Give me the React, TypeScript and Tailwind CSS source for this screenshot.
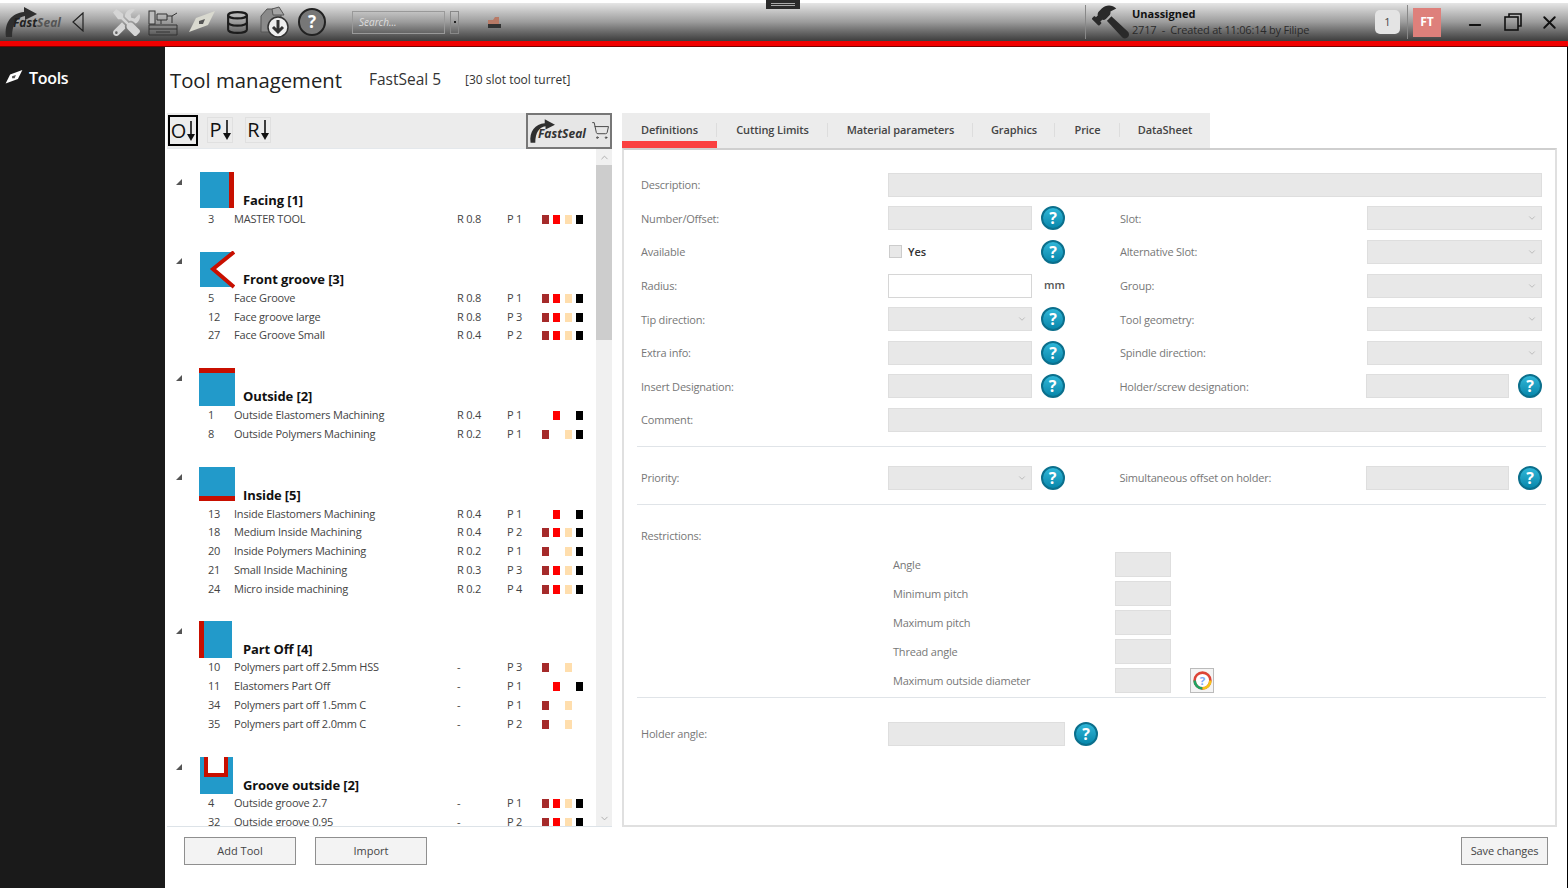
import { ChevronDown, ChevronUp, Database, Minus, ShoppingCart, X } from 'lucide-react'
import { FaHammer, FaTools } from 'react-icons/fa'

// ── Data ───────────────────────────────────────────────────────────────────

type Kind = 'right' | 'vee' | 'top' | 'bottom' | 'left' | 'groove'

const GROUPS: Array<{ title: string; kind: Kind; gap: number; rows: Array<[string, string, string, string, string]> }> = [
  { title: 'Facing [1]', kind: 'right', gap: 22, rows: [['3', 'MASTER TOOL', 'R 0.8', 'P 1', 'abcd']] },
  { title: 'Front groove [3]', kind: 'vee', gap: 23, rows: [
    ['5', 'Face Groove', 'R 0.8', 'P 1', 'abcd'],
    ['12', 'Face groove large', 'R 0.8', 'P 3', 'abcd'],
    ['27', 'Face Groove Small', 'R 0.4', 'P 2', 'abcd'],
  ] },
  { title: 'Outside [2]', kind: 'top', gap: 23, rows: [
    ['1', 'Outside Elastomers Machining', 'R 0.4', 'P 1', 'bd'],
    ['8', 'Outside Polymers Machining', 'R 0.2', 'P 1', 'acd'],
  ] },
  { title: 'Inside [5]', kind: 'bottom', gap: 22, rows: [
    ['13', 'Inside Elastomers Machining', 'R 0.4', 'P 1', 'bd'],
    ['18', 'Medium Inside Machining', 'R 0.4', 'P 2', 'abcd'],
    ['20', 'Inside Polymers Machining', 'R 0.2', 'P 1', 'acd'],
    ['21', 'Small Inside Machining', 'R 0.3', 'P 3', 'abcd'],
    ['24', 'Micro inside machining', 'R 0.2', 'P 4', 'abcd'],
  ] },
  { title: 'Part Off [4]', kind: 'left', gap: 23, rows: [
    ['10', 'Polymers part off 2.5mm HSS', '-', 'P 3', 'ac'],
    ['11', 'Elastomers Part Off', '-', 'P 1', 'bd'],
    ['34', 'Polymers part off 1.5mm C', '-', 'P 1', 'ac'],
    ['35', 'Polymers part off 2.0mm C', '-', 'P 2', 'ac'],
  ] },
  { title: 'Groove outside [2]', kind: 'groove', gap: 0, rows: [
    ['4', 'Outside groove 2.7', '-', 'P 1', 'abcd'],
    ['32', 'Outside groove 0.95', '-', 'P 2', 'abcd'],
  ] },
]

const TABS = [
  { label: 'Definitions', w: 'w-[95px]' },
  { label: 'Cutting Limits', w: 'w-[111px]' },
  { label: 'Material parameters', w: 'w-[145px]' },
  { label: 'Graphics', w: 'w-[82px]' },
  { label: 'Price', w: 'w-[65px]' },
  { label: 'DataSheet', w: 'w-[90px]' },
]

// ── Small drawings ─────────────────────────────────────────────────────────

function Logo({ small }: { small?: boolean }) {
  return (
    <div className={`relative flex-shrink-0 ${small ? 'w-[54px] h-[30px]' : 'w-[61px] h-[32px]'}`}>
      <svg viewBox="0 0 61 32" className={small ? 'w-[48px] h-[30px]' : 'w-full h-full'}>
        <path d="M2 31 C0 16 8 7 20 6 L20 1 L33 8 L21 14 L21 10 C13 11 8 18 8 31 Z" fill="#2f2f2f" />
      </svg>
      <span className={`absolute font-bold italic whitespace-nowrap leading-[16px] ${small ? 'left-[9px] top-[10px] text-[12px] text-[#333]' : 'left-[9px] top-[9px] text-[12px] text-[#222]'}`}>
        Fast<span className={small ? '' : 'text-[#555]'}>Seal</span>
      </span>
    </div>
  )
}

function Insert({ className }: { className: string }) {
  return (
    <svg viewBox="0 0 28 24" className={className}>
      <path d="M1 22 L8 8 L27 1 L20 15 Z" fill="currentColor" />
      <path d="M11 11 L17 9 L15 14 L11 14 Z" fill="#555" />
    </svg>
  )
}

function Machine() {
  return (
    <svg viewBox="0 0 30 28" className="w-[30px] h-[28px] ml-[8px]" fill="none" stroke="#333" strokeWidth="1">
      <rect x="1" y="3" width="6" height="13" fill="#bbb" />
      <path d="M1 17 H29 V27 H1 Z M1 21 H29 M8 24 H22" />
      <path d="M9 6 H19 V12 H9 Z M19 8 H24 L29 5 M24 8 V15 M13 12 V16" />
    </svg>
  )
}

function PackageDown() {
  return (
    <div className="relative w-[30px] h-[32px] ml-[9px]">
      <svg viewBox="0 0 30 32" className="w-full h-full">
        <path d="M2 10 L8 3 H17 L22 9 V26 H2 Z" fill="#8a8a8a" stroke="#555" />
        <path d="M13 3 L20 1 L25 9 H14 Z" fill="#a5a5a5" stroke="#555" />
        <circle cx="19" cy="21" r="10" fill="#eee" stroke="#333" strokeWidth="1.5" />
        <path d="M19 14 V26 M14 21 L19 26 L24 21" stroke="#333" strokeWidth="3" fill="none" />
      </svg>
    </div>
  )
}

function ToolIcon({ kind }: { kind: Kind }) {
  const red = '#c80f00'
  const blue = '#229aca'
  return (
    <svg viewBox="0 0 36 38" className="w-[36px] h-[38px] flex-shrink-0 mt-[1px] -ml-[1px]">
      {kind === 'right' && <><rect x="1" y="0" width="29" height="36" fill={blue} /><rect x="30" y="0" width="5" height="36" fill={red} /></>}
      {kind === 'vee' && <><path d="M1 1 H35 L14 18 L35 36 H1 Z" fill={blue} /><path d="M35 1 L14 18 L35 36" fill="none" stroke={red} strokeWidth="4" /></>}
      {kind === 'top' && <><rect x="0" y="5" width="36" height="34" fill={blue} /><rect x="0" y="0" width="36" height="5" fill={red} /></>}
      {kind === 'bottom' && <><rect x="0" y="0" width="36" height="29" fill={blue} /><rect x="0" y="29" width="36" height="5" fill={red} /></>}
      {kind === 'left' && <><rect x="4" y="0" width="29" height="37" fill={blue} /><rect x="0" y="0" width="5" height="37" fill={red} /></>}
      {kind === 'groove' && <><rect x="1" y="0" width="33" height="37" fill={blue} /><path d="M7 0 V18 H27 V0" fill="#fff" stroke={red} strokeWidth="4" /></>}
    </svg>
  )
}

function SortIcon({ letter, active }: { letter: string; active?: boolean }) {
  return (
    <div className={`flex items-center justify-center text-[20px] leading-none text-[#111] ${active ? 'w-[30px] h-[31px] border-2 border-black' : 'w-[26px] h-[26px] border border-[#e0e0e0]'}`}>
      {letter}
      <svg viewBox="0 0 8 20" className="w-[8px] h-[22px] ml-[1px]">
        <path d="M4 0 V15" stroke="#111" strokeWidth="1.6" />
        <path d="M0 13 H8 L4 20 Z" fill="#111" />
      </svg>
    </div>
  )
}

function Help({ className = '' }: { className?: string }) {
  return (
    <div className={`w-[24px] h-[24px] rounded-full flex-shrink-0 flex items-center justify-center border-2 border-[#0b6f8c] bg-gradient-to-b from-[#2fb7d8] to-[#0587ab] text-white text-[16px] font-bold leading-none ${className}`}>
      ?
    </div>
  )
}

// ── Form pieces ────────────────────────────────────────────────────────────

const inputCls = 'h-[24px] bg-[#e8e8e8] border border-[#dedede]'

function Select({ w }: { w: string }) {
  return (
    <div className={`${inputCls} ${w} flex items-center justify-end pr-[4px]`}>
      <ChevronDown className="w-[10px] h-[10px] text-[#b5b5b5]" />
    </div>
  )
}

function Label({ w, children }: { w: string; children: React.ReactNode }) {
  return <div className={`${w} flex-shrink-0 text-[11px] text-[#777] leading-none tracking-[-0.2px]`}>{children}</div>
}

function Row({ h = 'h-[33.6px]', children }: { h?: string; children: React.ReactNode }) {
  return <div className={`${h} flex items-center`}>{children}</div>
}

function Divider() {
  return <div className="h-px bg-[#e0e4e8] -ml-[4px] -mr-[4px]" />
}

// ── Page ───────────────────────────────────────────────────────────────────

export default function App() {
  return (
    <div className="relative w-screen h-screen overflow-hidden flex flex-col bg-white font-['Open_Sans',sans-serif]">

      {/* Header */}
      <header className="h-[47px] flex-shrink-0 flex flex-col">
        <div className="h-[38px] flex-shrink-0 mt-[3px] flex items-center pl-[4px] bg-gradient-to-b from-[#e6e6e6] via-[#9c9c9c] to-[#3e3e3e]">
          <Logo />
          <svg viewBox="0 0 12 20" className="w-[12px] h-[20px] ml-[7px]" fill="none" stroke="#222" strokeWidth="1.2">
            <path d="M11 1 L1 10 L11 19 Z" />
          </svg>
          <FaTools className="w-[27px] h-[27px] ml-[29px] text-[#d5d5d5]" />
          <Machine />
          <Insert className="w-[28px] h-[24px] ml-[10px] text-[#d9d9cf]" />
          <Database className="w-[25px] h-[27px] ml-[9px] text-[#1c1c1c]" strokeWidth={2} />
          <PackageDown />
          <div className="w-[28px] h-[28px] ml-[9px] rounded-full border-2 border-[#222] bg-[#777] flex items-center justify-center text-white text-[17px] font-bold">?</div>
          <div className="w-[93px] h-[23px] ml-[26px] border border-[#999] flex items-center pl-[6px] text-[10px] italic text-[#ddd]">Search...</div>
          <div className="w-[9px] h-[23px] ml-[5px] border border-[#888] flex items-center justify-center">
            <div className="w-[2px] h-[2px] bg-[#222]" />
          </div>
          <svg viewBox="0 0 14 12" className="w-[14px] h-[12px] ml-[28px]">
            <path d="M1 4 H6 L8 1 H12 V8 H1 Z" fill="#b87a66" />
            <rect x="1" y="8" width="13" height="4" fill="#333" />
          </svg>
          <div className="flex-1" />
          <div className="w-px h-[34px] bg-[#888]" />
          <FaHammer className="w-[37px] h-[36px] ml-[6px] text-[#2a2a2a] -scale-x-100" />
          <div className="ml-[3px] w-[243px] text-[11px] leading-[16px] -mt-[1px]">
            <div className="font-bold text-[#111]">Unassigned</div>
            <div className="text-[#2a2a2a] whitespace-nowrap tracking-[-0.2px]">2717&nbsp; -&nbsp; Created at 11:06:14 by Filipe</div>
          </div>
          <div className="w-[25px] h-[24px] rounded-[5px] bg-[#e4e4e4] flex items-center justify-center text-[11px] text-[#444]">1</div>
          <div className="w-px h-[34px] ml-[7px] bg-[#888]" />
          <div className="w-[28px] h-[29px] ml-[5px] bg-[#de807b] flex items-center justify-center text-[12px] font-bold text-white">FT</div>
          <Minus className="w-[18px] h-[18px] ml-[25px] mt-[6px] text-[#111]" strokeWidth={2.4} />
          <svg viewBox="0 0 18 18" className="w-[18px] h-[18px] ml-[20px]" fill="none" stroke="#111" strokeWidth="1.6">
            <path d="M5 4 V1 H17 V13 H14" />
            <rect x="1" y="4" width="13" height="13" />
          </svg>
          <X className="w-[21px] h-[21px] ml-[17px] mr-[8px] text-[#111]" strokeWidth={2.2} />
        </div>
        <div className="h-[6px] flex-shrink-0 bg-[#f00000] border-b border-[#700]" />
      </header>

      {/* Body */}
      <div className="flex-1 flex min-h-0">
        <aside className="w-[165px] flex-shrink-0 bg-[#1a1a1a] flex items-start pt-[21px] pl-[5px] gap-[6px]">
          <Insert className="w-[18px] h-[18px] text-white" />
          <span className="text-[16px] leading-[20px] font-semibold text-white tracking-[-0.3px]">Tools</span>
        </aside>

        <main className="flex-1 min-w-0 flex flex-col border-r border-black">
          {/* Title */}
          <div className="h-[66px] flex-shrink-0 flex items-center pl-[5px]">
            <h1 className="w-[199px] text-[20.3px] leading-[28px] text-[#222]">Tool management</h1>
            <span className="w-[96px] text-[15.5px] text-[#333]">FastSeal 5</span>
            <span className="text-[12px] text-[#333]">[30 slot tool turret]</span>
          </div>

          <div className="h-[714px] flex-shrink-0 flex pl-[2px]">
            {/* Tree column */}
            <div className="w-[445px] flex-shrink-0 flex flex-col">
              <div className="h-[36px] flex-shrink-0 flex items-center bg-[#ececec] pl-[1px] border-b border-[#e4e8ec]">
                <SortIcon letter="O" active />
                <div className="ml-[9px] mb-[2px]"><SortIcon letter="P" /></div>
                <div className="ml-[12px] mb-[2px]"><SortIcon letter="R" /></div>
                <div className="ml-auto w-[86px] h-[36px] border-2 border-[#777] flex items-center pl-[1px] bg-[#e6e6e6]">
                  <Logo small />
                  <ShoppingCart className="w-[22px] h-[23px] ml-[8px] text-[#444]" strokeWidth={1.2} />
                </div>
              </div>

              <div className="flex-1 min-h-0 flex border-b border-[#dde3e8]">
                <div className="flex-1 min-w-0 overflow-hidden pt-[22.3px]">
                  {GROUPS.map(g => (
                    <div key={g.title} style={{ marginBottom: g.gap }}>
                      <div className="h-[38px] flex">
                        <div className="w-[33px] pl-[9px] pt-[8px] flex-shrink-0">
                          <div className="w-0 h-0 border-l-[6px] border-l-transparent border-b-[6px] border-b-[#555]" />
                        </div>
                        <ToolIcon kind={g.kind} />
                        <div className="ml-[8px] self-end text-[13px] leading-[18px] font-bold text-[#111] tracking-[-0.1px]">{g.title}</div>
                      </div>
                      {g.rows.map(r => (
                        <div key={r[0]} className="h-[18.75px] flex items-center text-[11px] text-[#444] leading-none tracking-[-0.2px]">
                          <span className="w-[67px] pl-[41px] flex-shrink-0">{r[0]}</span>
                          <span className="w-[223px] flex-shrink-0 whitespace-nowrap">{r[1]}</span>
                          <span className="w-[50px] flex-shrink-0">{r[2]}</span>
                          <span className="w-[35px] flex-shrink-0">{r[3]}</span>
                          <div className="flex gap-[4.3px] mt-[2px]">
                            <div className={`w-[7px] h-[9px] ${r[4].includes('a') ? 'bg-[#a52a2a]' : ''}`} />
                            <div className={`w-[7px] h-[9px] ${r[4].includes('b') ? 'bg-[#ff0000]' : ''}`} />
                            <div className={`w-[7px] h-[9px] ${r[4].includes('c') ? 'bg-[#ffdead]' : ''}`} />
                            <div className={`w-[7px] h-[9px] ${r[4].includes('d') ? 'bg-black' : ''}`} />
                          </div>
                        </div>
                      ))}
                    </div>
                  ))}
                </div>
                {/* Scrollbar */}
                <div className="w-[16px] flex-shrink-0 bg-[#f0f0f0] flex flex-col">
                  <div className="h-[16px] flex items-center justify-center"><ChevronUp className="w-[11px] h-[11px] text-[#aaa]" /></div>
                  <div className="h-[175px] bg-[#cdcdcd]" />
                  <div className="flex-1" />
                  <div className="h-[16px] flex items-center justify-center"><ChevronDown className="w-[11px] h-[11px] text-[#aaa]" /></div>
                </div>
              </div>
            </div>

            {/* Details column */}
            <div className="w-[935px] ml-[10px] flex-shrink-0 flex flex-col">
              <div className="h-[35px] w-[588px] flex-shrink-0 flex bg-[#ececec]">
                {TABS.map((t, i) => (
                  <div key={t.label} className={`${t.w} relative flex items-center justify-center text-[11px] font-semibold text-[#444] tracking-[-0.1px]`}>
                    {t.label}
                    {i < TABS.length - 1 && <div className="absolute right-0 top-[10px] h-[14px] w-px bg-[#ddd]" />}
                    {i === 0 && <div className="absolute left-0 right-0 bottom-0 h-[7px] bg-[#fa4040]" />}
                  </div>
                ))}
              </div>

              <div className="flex-1 min-h-0 border-2 border-[#e0e0e0] border-t-[#cfcfcf] pt-[18px] pl-[17px] pr-[13px]">
                <Row>
                  <Label w="w-[247px]">Description:</Label>
                  <div className={`${inputCls} flex-1`} />
                </Row>
                <Row>
                  <Label w="w-[247px]">Number/Offset:</Label>
                  <div className={`${inputCls} w-[144px]`} />
                  <div className="w-[87px] pl-[9px]"><Help /></div>
                  <Label w="w-[248px]"><span className="pl-px">Slot:</span></Label>
                  <Select w="w-[175px]" />
                </Row>
                <Row>
                  <Label w="w-[247px]">Available</Label>
                  <div className="w-[144px] flex items-center pl-[1px]">
                    <div className="w-[13px] h-[13px] bg-[#e8e8e8] border border-[#ccc]" />
                    <span className="ml-[6px] text-[11px] font-semibold text-[#333]">Yes</span>
                  </div>
                  <div className="w-[87px] pl-[9px]"><Help /></div>
                  <Label w="w-[248px]"><span className="pl-px">Alternative Slot:</span></Label>
                  <Select w="w-[175px]" />
                </Row>
                <Row>
                  <Label w="w-[247px]">Radius:</Label>
                  <div className="w-[144px] h-[24px] bg-white border border-[#d6d6d6]" />
                  <div className="w-[87px] pl-[12px] text-[11px] font-semibold text-[#555]">mm</div>
                  <Label w="w-[248px]"><span className="pl-px">Group:</span></Label>
                  <Select w="w-[175px]" />
                </Row>
                <Row>
                  <Label w="w-[247px]">Tip direction:</Label>
                  <Select w="w-[144px]" />
                  <div className="w-[87px] pl-[9px]"><Help /></div>
                  <Label w="w-[248px]"><span className="pl-px">Tool geometry:</span></Label>
                  <Select w="w-[175px]" />
                </Row>
                <Row>
                  <Label w="w-[247px]">Extra info:</Label>
                  <div className={`${inputCls} w-[144px]`} />
                  <div className="w-[87px] pl-[9px]"><Help /></div>
                  <Label w="w-[248px]"><span className="pl-px">Spindle direction:</span></Label>
                  <Select w="w-[175px]" />
                </Row>
                <Row>
                  <Label w="w-[247px]">Insert Designation:</Label>
                  <div className={`${inputCls} w-[144px]`} />
                  <div className="w-[87px] pl-[9px]"><Help /></div>
                  <Label w="w-[248px]"><span className="pl-px">Holder/screw designation:</span></Label>
                  <div className={`${inputCls} w-[143px]`} />
                  <Help className="ml-[9px]" />
                </Row>
                <Row>
                  <Label w="w-[247px]">Comment:</Label>
                  <div className={`${inputCls} flex-1`} />
                </Row>
                <div className="h-[9px]" />
                <Divider />
                <Row h="h-[57px] pt-[5px]">
                  <Label w="w-[247px]">Priority:</Label>
                  <Select w="w-[144px]" />
                  <div className="w-[87px] pl-[9px]"><Help /></div>
                  <Label w="w-[248px]"><span className="pl-px">Simultaneous offset on holder:</span></Label>
                  <div className={`${inputCls} w-[143px]`} />
                  <Help className="ml-[9px]" />
                </Row>
                <Divider />
                <Row h="h-[28px] mt-[17px]">
                  <Label w="w-[247px]">Restrictions:</Label>
                </Row>
                <div className="pl-[252px]">
                  {['Angle', 'Minimum pitch', 'Maximum pitch', 'Thread angle', 'Maximum outside diameter'].map((l, i) => (
                    <div key={l} className="h-[29px] flex items-center">
                      <Label w="w-[222px]">{l}</Label>
                      <div className="w-[56px] h-[25px] bg-[#e8e8e8] border border-[#dedede]" />
                      {i === 4 && (
                        <div className="ml-[19px] w-[24px] h-[25px] bg-[#f4f4f4] border border-[#bbb] flex items-center justify-center relative">
                          <svg viewBox="0 0 24 24" className="w-[21px] h-[21px]">
                            <circle cx="12" cy="12" r="9" fill="white" stroke="#dc4437" strokeWidth="3" />
                            <path d="M12 21 A9 9 0 0 1 3 12" fill="none" stroke="#1fa463" strokeWidth="3" />
                            <path d="M21 12 A9 9 0 0 1 12 21" fill="none" stroke="#f5c518" strokeWidth="3" />
                            <text x="12" y="17" textAnchor="middle" fontSize="13" fontWeight="700" fill="#7baaf7">?</text>
                          </svg>
                        </div>
                      )}
                    </div>
                  ))}
                </div>
                <div className="h-[2px]" />
                <Divider />
                <Row h="h-[72px]">
                  <Label w="w-[247px]">Holder angle:</Label>
                  <div className={`${inputCls} w-[177px]`} />
                  <Help className="ml-[9px]" />
                </Row>
              </div>
            </div>
          </div>

          {/* Footer buttons */}
          <div className="flex-1 flex items-start pt-[10px] pl-[19px] pr-[19px]">
            <button className="w-[112px] h-[28px] bg-[#f3f3f3] border border-[#8f8f8f] text-[11px] text-[#444]">Add Tool</button>
            <button className="w-[112px] h-[28px] ml-[19px] bg-[#f3f3f3] border border-[#8f8f8f] text-[11px] text-[#444]">Import</button>
            <button className="w-[87px] h-[28px] ml-auto bg-[#f3f3f3] border border-[#8f8f8f] text-[11px] text-[#444] tracking-[-0.1px]">Save changes</button>
          </div>
        </main>
      </div>

      {/* Notch over the top edge */}
      <div className="absolute left-[766px] top-0 w-[34px] h-[9px] bg-[#2b2b2b] flex flex-col gap-[1px] items-center justify-center">
        <div className="w-[24px] h-px bg-[#aaa]" />
        <div className="w-[24px] h-px bg-[#aaa]" />
      </div>
    </div>
  )
}
